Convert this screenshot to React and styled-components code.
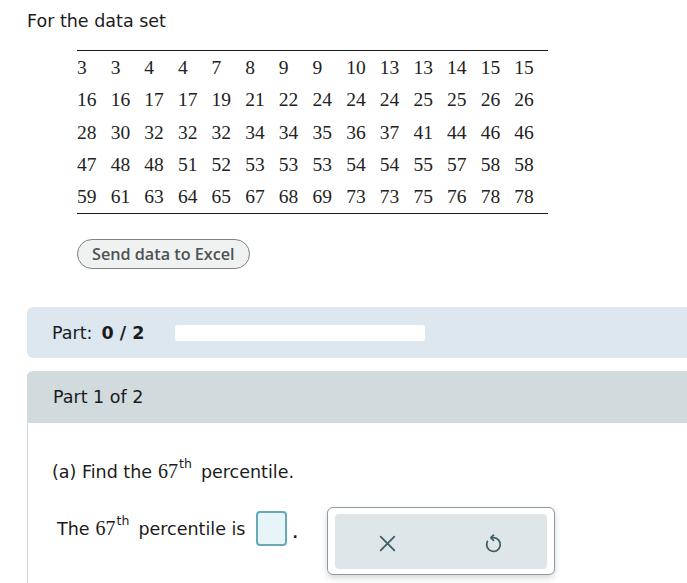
import React from "react";
import styled, { createGlobalStyle } from "styled-components";

const GlobalStyle = createGlobalStyle`
  html, body {
    margin: 0;
    padding: 0;
    background: #ffffff;
    overflow: hidden;
  }
  body {
    font-family: "DejaVu Sans", Verdana, sans-serif;
    font-size: 17.5px;
    color: #1b1b1b;
  }
`;

const Page = styled.div`
  width: 687px;
  height: 583px;
  padding: 11px 0 0 27px;
  box-sizing: border-box;
`;

const Intro = styled.div`
  line-height: 20px;
  height: 20px;
`;

const DataTable = styled.div`
  margin: 19px 0 0 50px;
  width: 471px;
  border-top: 1px solid #1a1a1a;
  border-bottom: 1px solid #1a1a1a;
  padding-top: 1px;
  display: grid;
  grid-template-columns: repeat(14, 1fr);
  font-family: "Liberation Serif", "Times New Roman", serif;
  font-size: 19.5px;
  color: #222;
`;

const Cell = styled.div`
  height: 32.3px;
  line-height: 32.3px;
`;

const ExcelButton = styled.button`
  display: block;
  margin: 25px 0 0 50px;
  height: 30px;
  padding: 0 14px 1px;
  border: 1px solid #7b8384;
  border-radius: 16px;
  background: #f0f2f1;
  color: #4c5455;
  font-family: "Open Sans", sans-serif;
  font-weight: 600;
  font-size: 16.2px;
`;

const ProgressBar = styled.div`
  margin-top: 38px;
  height: 51px;
  background: #dce7f0;
  border-radius: 6px 0 0 6px;
  display: flex;
  align-items: center;
  padding-left: 25px;
`;

const Bold = styled.b`
  font-weight: bold;
  margin-left: 9px;
  margin-right: 31px;
  white-space: pre;
`;

const Track = styled.div`
  width: 250px;
  height: 16px;
  background: #ffffff;
  border-radius: 3px;
`;

const PartPanel = styled.div`
  margin-top: 13px;
  border-left: 1px solid #d3dcdf;
  border-radius: 6px 0 0 0;
  height: 220px;
`;

const PartHeader = styled.div`
  height: 52px;
  background: #d1dadd;
  border-radius: 6px 0 0 0;
  margin-left: -1px;
  display: flex;
  align-items: center;
  padding-left: 26px;
`;

const Question = styled.div`
  margin: 36px 0 0 24px;
  line-height: 24px;
  display: flex;
  align-items: baseline;
`;

const Num = styled.span`
  font-family: "Liberation Serif", "Times New Roman", serif;
  font-size: 20px;
  margin-left: 6px;
`;

const Sup = styled.span`
  font-size: 12.5px;
  position: relative;
  top: -10px;
  margin: 0 9px 0 1px;
`;

const AnswerRow = styled.div`
  margin: 21px 0 0 29px;
  display: flex;
  align-items: flex-start;
`;

const AnswerText = styled.div`
  margin-top: 4px;
  display: flex;
  align-items: center;
`;

const Inline = styled.span`
  display: flex;
  align-items: baseline;
`;

const AnswerBox = styled.div`
  width: 31px;
  height: 35px;
  margin-left: 11px;
  box-sizing: border-box;
  border: 2px solid #68a9b8;
  border-radius: 4px;
  background: #e6f4f8;
`;

const Dot = styled.span`
  margin: 8px 0 0 5px;
  font-weight: bold;
  font-size: 14px;
`;

const ToolPanel = styled.div`
  margin-left: 29px;
  width: 228px;
  height: 68px;
  box-sizing: border-box;
  border: 1px solid #8e9a9e;
  border-radius: 6px;
  background: #fff;
  padding: 6px 7px 5px;
  box-shadow: 0 3px 6px rgba(80, 100, 110, 0.25);
`;

const ToolInner = styled.div`
  height: 100%;
  background: #dfe6e9;
  border-radius: 4px;
  display: flex;
  align-items: center;
  justify-content: space-around;
  padding-top: 4px;
  box-sizing: border-box;
`;

const ToolIcon = styled.svg`
  width: 21px;
  height: 21px;
  fill: none;
  stroke: #3f5d69;
  stroke-width: 1.7;
  stroke-linecap: round;
  stroke-linejoin: round;
`;

const rows = [
  [3, 3, 4, 4, 7, 8, 9, 9, 10, 13, 13, 14, 15, 15],
  [16, 16, 17, 17, 19, 21, 22, 24, 24, 24, 25, 25, 26, 26],
  [28, 30, 32, 32, 32, 34, 34, 35, 36, 37, 41, 44, 46, 46],
  [47, 48, 48, 51, 52, 53, 53, 53, 54, 54, 55, 57, 58, 58],
  [59, 61, 63, 64, 65, 67, 68, 69, 73, 73, 75, 76, 78, 78],
];

export default function App() {
  return (
    <>
      <GlobalStyle />
      <Page>
        <Intro>For the data set</Intro>
        <DataTable>
          {rows.flat().map((v, i) => (
            <Cell key={i}>{v}</Cell>
          ))}
        </DataTable>
        <ExcelButton>Send data to Excel</ExcelButton>

        <ProgressBar>
          Part:<Bold>0 / 2</Bold>
          <Track />
        </ProgressBar>

        <PartPanel>
          <PartHeader>Part 1 of 2</PartHeader>
          <Question>
            (a) Find the<Num>67</Num>
            <Sup>th</Sup>percentile.
          </Question>
          <AnswerRow>
            <AnswerText>
              <Inline>
                The<Num>67</Num>
                <Sup>th</Sup>percentile is
              </Inline>
              <AnswerBox />
              <Dot>.</Dot>
            </AnswerText>
            <ToolPanel>
              <ToolInner>
                <ToolIcon viewBox="0 0 20 20">
                  <path d="M3.5 3.5 L16.5 16.5 M16.5 3.5 L3.5 16.5" />
                </ToolIcon>
                <ToolIcon viewBox="0 0 20 20">
                  <path d="M8 4.5 H10 A6.5 6.5 0 1 1 4.2 8" />
                  <path d="M10 2 L7.5 4.5 L10 7" />
                </ToolIcon>
              </ToolInner>
            </ToolPanel>
          </AnswerRow>
        </PartPanel>
      </Page>
    </>
  );
}
